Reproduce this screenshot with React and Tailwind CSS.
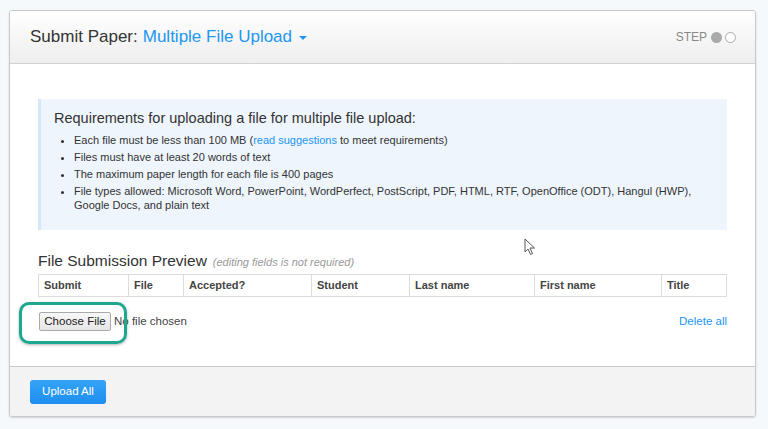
import React from "react"

const columns = [
  { name: "Submit", w: "w-[89px]" },
  { name: "File", w: "w-[55px]" },
  { name: "Accepted?", w: "w-[128px]" },
  { name: "Student", w: "w-[98px]" },
  { name: "Last name", w: "w-[125px]" },
  { name: "First name", w: "w-[127px]" },
  { name: "Title", w: "flex-1" },
]

const App = () => {
  return (
    <div className="relative h-[429px] w-[768px] overflow-hidden bg-[#f6f9fc] pt-[10px] pl-[9px] font-['Liberation_Sans',Arial,sans-serif]">
      <div className="w-[747px] rounded-[3px] border border-[#c9c9c9] shadow-[0_1px_2px_rgba(0,0,0,0.15)] overflow-hidden">
        {/* header */}
        <div className="flex h-[53px] items-center justify-between border-b border-[#d2d2d2] bg-gradient-to-b from-white to-[#eeeeee] pl-[20px] pr-[19px]">
          <div className="flex items-center text-[17px] text-[#333]">
            <span>Submit Paper:</span>
            <span className="ml-[5px] text-[#2196f3]">Multiple File Upload</span>
            <span className="ml-[7px] mt-[2px] h-0 w-0 border-x-[4px] border-t-[4px] border-x-transparent border-t-[#2196f3]"></span>
          </div>
          <div className="flex items-center text-[12px] text-[#888]">
            <span className="mr-[4px]">STEP</span>
            <span className="h-[11px] w-[11px] rounded-full bg-[#aaa]"></span>
            <span className="ml-[3px] h-[11px] w-[11px] rounded-full border border-[#aaa] bg-white"></span>
          </div>
        </div>

        {/* body */}
        <div className="h-[302px] bg-white px-[28px] pt-[35px]">
          <div className="h-[131px] border-l-[3px] border-[#d5e6f7] bg-[#eef5fd] pl-[13px] pt-[11px] text-[#333]">
            <div className="text-[14.5px] leading-[17px]">Requirements for uploading a file for multiple file upload:</div>
            <ul className="mt-[6px] list-disc pl-[20px] text-[11px] leading-[14px]">
              <li className="mb-[3px]">
                Each file must be less than 100 MB (<span className="text-[#2196f3]">read suggestions</span> to meet requirements)
              </li>
              <li className="mb-[3px]">Files must have at least 20 words of text</li>
              <li className="mb-[3px]">The maximum paper length for each file is 400 pages</li>
              <li className="pr-[10px]">
                File types allowed: Microsoft Word, PowerPoint, WordPerfect, PostScript, PDF, HTML, RTF, OpenOffice (ODT), Hangul (HWP), Google Docs, and plain text
              </li>
            </ul>
          </div>

          <div className="mt-[19px] flex h-[20px] items-baseline">
            <span className="text-[15.5px] text-[#333]">File Submission Preview</span>
            <span className="ml-[6px] text-[11px] italic text-[#999]">(editing fields is not required)</span>
          </div>

          <div className="mt-[5px] flex h-[23px] border border-[#dcdcdc] text-[11px] font-bold text-[#444]">
            {columns.map((c, i) => (
              <div
                key={c.name}
                className={`${c.w} flex items-center pl-[5px] ${i > 0 ? "border-l border-[#dcdcdc]" : ""}`}
              >
                {c.name}
              </div>
            ))}
          </div>

          <div className="mt-[15px] flex items-center justify-between">
            <div className="flex items-center text-[11px] text-[#444]">
              <button className="ml-[1px] h-[19px] w-[72px] rounded-[2px] border border-[#aaa] bg-gradient-to-b from-[#f8f8f8] to-[#e6e6e6] text-[11.5px] text-[#222]">
                Choose File
              </button>
              <span className="ml-[3px] text-[11.5px]">No file chosen</span>
            </div>
            <span className="text-[11.5px] text-[#2196f3]">Delete all</span>
          </div>
        </div>

        {/* footer */}
        <div className="flex h-[50px] items-center border-t border-[#c9c9c9] bg-[#f3f3f3] pl-[20px]">
          <button className="h-[24px] w-[76px] rounded-[3px] bg-gradient-to-b from-[#34a3f7] to-[#1e8ef0] text-[11.5px] text-white">
            Upload All
          </button>
        </div>
      </div>

      {/* highlight annotation */}
      <div className="absolute left-[19px] top-[302px] h-[42px] w-[108px] rounded-[10px] border-[3px] border-[#1ca88e] shadow-[0_1px_3px_rgba(0,0,0,0.3)]"></div>

      {/* mouse cursor */}
      <svg className="absolute left-[524px] top-[238px]" width="12" height="18" viewBox="0 0 12 18">
        <path d="M1 1 L1 14 L4 11 L6.5 16.5 L8.5 15.5 L6 10 L10.5 10 Z" fill="white" stroke="#555" strokeWidth="1" strokeLinejoin="round" />
      </svg>
    </div>
  )
}

export default App
